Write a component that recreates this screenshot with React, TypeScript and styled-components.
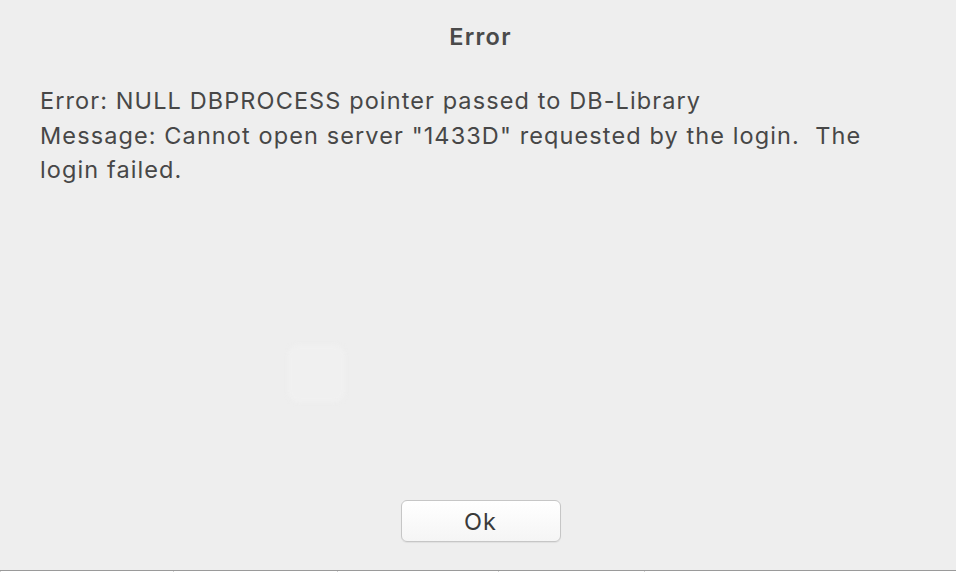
import styled, { createGlobalStyle } from 'styled-components'

const GlobalStyle = createGlobalStyle`
  html, body {
    margin: 0;
    padding: 0;
    background: #eeeeee;
    overflow: hidden;
  }
  body {
    font-family: Inter, "Noto Sans", "Liberation Sans", sans-serif;
  }
`

const Page = styled.div`
  width: 956px;
  height: 572px;
  display: flex;
  flex-direction: column;
  overflow: hidden;
`

const Dialog = styled.div`
  position: relative;
  flex: none;
  height: 570px;
  background: #eeeeee;
  display: flex;
  flex-direction: column;
  align-items: center;
  box-sizing: border-box;
  padding: 22px 0 28px 5px;
`

const Title = styled.h1`
  margin: 0;
  font-size: 23.5px;
  font-weight: 600;
  line-height: 30px;
  color: #4a4a4a;
  letter-spacing: 1.3px;
`

const Message = styled.p`
  align-self: stretch;
  margin: 32px 0 0;
  padding: 0 70px 0 35px;
  font-size: 23.5px;
  line-height: 34.5px;
  letter-spacing: 1.1px;
  color: #474747;
  white-space: pre-wrap;
`

const Ghost = styled.div`
  position: absolute;
  left: 288px;
  top: 345px;
  width: 57px;
  height: 57px;
  border-radius: 10px;
  background: #f0f0f0;
  filter: blur(2px);
`

const Spacer = styled.div`
  flex: 1;
`

const OkButton = styled.button`
  width: 160px;
  height: 42px;
  border: 1px solid #c6c6c6;
  border-radius: 6px;
  background: linear-gradient(#ffffff, #f5f5f5);
  font-family: inherit;
  font-size: 23.5px;
  letter-spacing: 1px;
  color: #3a3a3a;
  box-shadow: 0 1px 1px rgba(0, 0, 0, 0.06);
`

const Underneath = styled.div`
  flex: none;
  height: 1px;
  border-top: 1px solid #9a9a9a;
  background: #ffffff;
  display: flex;
  overflow: hidden;
`

const Cell = styled.span<{ $w: number }>`
  width: ${p => p.$w}px;
  flex: none;
  border-left: 1px solid #d4d4d4;
`

export default function App() {
  return (
    <>
      <GlobalStyle />
      <Page>
        <Dialog>
          <Title>Error</Title>
          <Message>
            {'Error: NULL DBPROCESS pointer passed to DB-Library\nMessage: Cannot open server "1433D" requested by the login.  The login failed.'}
          </Message>
          <Ghost />
          <Spacer />
          <OkButton>Ok</OkButton>
        </Dialog>
        <Underneath>
          <Cell $w={172} />
          <Cell $w={163} />
          <Cell $w={160} />
          <Cell $w={145} />
          <Cell $w={146} />
        </Underneath>
      </Page>
    </>
  )
}
